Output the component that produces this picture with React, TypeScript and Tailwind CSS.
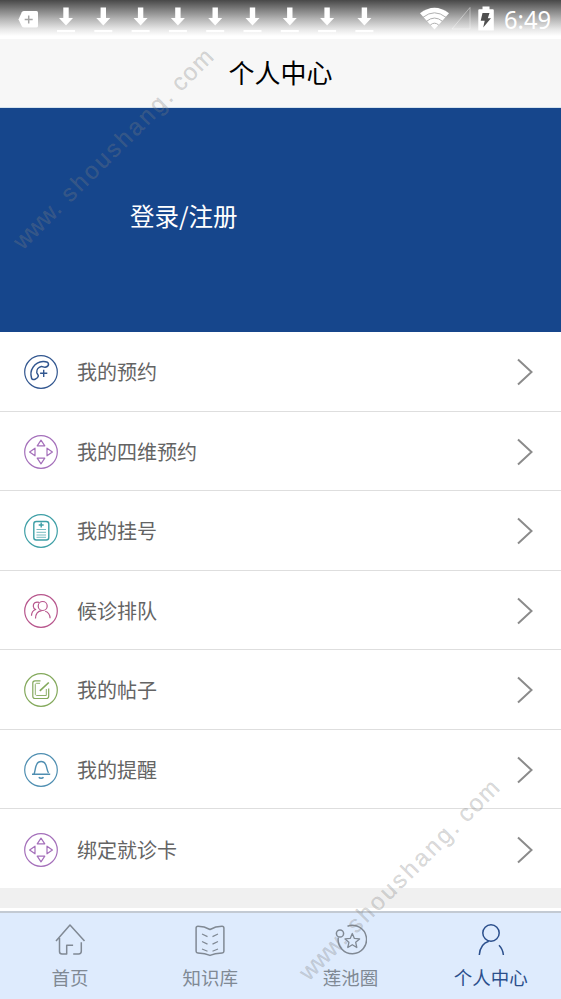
import type { ReactNode } from 'react'

interface MenuItem {
  label: string
  color: string
  icon: ReactNode
}

interface TabItem {
  label: string
  active?: boolean
  icon: ReactNode
}

const arrows = (
  <path d="M17 6.200l3.800 5.600h-7.600zM17 29.800l3.800-5.600h-7.600zM5.600 18l5.400-3.800v7.600zM28.400 18l-5.400-3.800v7.600z" />
)

const menuItems: MenuItem[] = [
  {
    label: '我的预约',
    color: 'text-[#31568f]',
    icon: (
      <>
        <path
          d="M7.600 24.200C5 16.500 10.500 8 19 7.600c3-.1 5.300.8 5.500 2.600.1 1.600-1.600 2.600-3.200 3-1.700.4-2.500-1-4-.7-3 .6-4.800 3.300-4.500 6.200.2 1.400 1.900 1.900 1.500 3.500-.5 2.400-5.700 5-6.700 2z"
          strokeWidth="1.500"
        />
        <path d="M19.700 15.700v7.200M16.100 19.300h7.200" strokeWidth="1.400" />
      </>
    ),
  },
  { label: '我的四维预约', color: 'text-[#a46fba]', icon: arrows },
  {
    label: '我的挂号',
    color: 'text-[#3e9fa6]',
    icon: (
      <>
        <rect x="9.800" y="8.500" width="15" height="18.500" rx="2.500" strokeWidth="1.400" />
        <path d="M17.200 9.500v5M14.700 12h5" strokeWidth="1.400" />
        <path d="M12.500 16.500h9.500M12.500 19.300h9.500M12.500 22h9.500M12.500 24.300h9.500" strokeWidth="0.700" />
      </>
    ),
  },
  {
    label: '候诊排队',
    color: 'text-[#b7558c]',
    icon: (
      <>
        <circle cx="18.700" cy="13" r="4.500" />
        <path d="M15 9.400c-3.400-1.200-6 1-5.700 3.900.1 1.500 1 2.700 2.400 3.200-2.500.9-4.200 3.300-4.200 6.300M11.500 25.500c.200-4.800 2.700-7.600 6.200-7.900M21.200 18.200c3 .9 4.700 3.500 4.900 7" />
      </>
    ),
  },
  {
    label: '我的帖子',
    color: 'text-[#83a95b]',
    icon: (
      <>
        <path d="M16.500 8.900h-5.500c-1.300 0-2.200.9-2.200 2.200v13.200c0 1.300.9 2.200 2.200 2.200h11.500c1.300 0 2.200-.9 2.200-2.200v-7.800" />
        <path d="M16 11.300h-3.200c-.9 0-1.500.6-1.500 1.500v9.200c0 .9.6 1.500 1.500 1.500h9.500v-6.500" strokeWidth="0.900" />
        <path d="M15.800 18.800l9-8.300" strokeWidth="1.700" />
      </>
    ),
  },
  {
    label: '我的提醒',
    color: 'text-[#4e8eb1]',
    icon: (
      <>
        <path
          d="M8 22.300h18.200M10 22c1.300-2.600.9-5.600 2.400-9 1.800-4.600 7.600-4.600 9.500 0 1.300 3.400 1 5.500 2.600 7.800"
          strokeWidth="1.400"
        />
        <path d="M14.800 25.200c1.100 1.500 3.600 1.500 4.700 0" strokeWidth="1.500" />
      </>
    ),
  },
  { label: '绑定就诊卡', color: 'text-[#a46fba]', icon: arrows },
]

const tabs: TabItem[] = [
  {
    label: '首页',
    icon: <path d="M2 18L16 2l14.500 16M5.500 15v13.500c0 1.800.7 2.500 2.500 2.500h4.700v-8.800h6.400M19.200 31h5.400c1.800 0 2.700-.9 2.700-2.700V19.200" />,
  },
  {
    label: '知识库',
    icon: (
      <>
        <path d="M16 6.500C12.500 4.500 8.500 3.300 4 3.300c-1.200 0-1.900.6-1.900 1.800v23.200c0 1.200.6 1.700 1.800 1.800 4.600.3 8.800 1 12.100 2.300 3.300-1.300 7.500-2 12.100-2.300 1.200-.1 1.800-.6 1.800-1.800V5.100c0-1.200-.7-1.800-1.900-1.800-4.500 0-8.500 1.200-12 3.200z" />
        <path d="M8 11l5.500 2.600M8 18.500l5.500 2.600M8 26l5.500 2.300M24 11l-5.500 2.600M24 18.500l-5.500 2.600M24 26l-5.500 2.300" strokeWidth="1.200" />
      </>
    ),
  },
  {
    label: '莲池圈',
    icon: (
      <>
        <path d="M12.500 3.200A14.200 14.200 0 1 1 3.300 14.500" />
        <circle cx="5" cy="10.500" r="3.600" />
        <path d="M17.300 10.500l2.100 4.900 5.200.5-3.900 3.400 1.100 5.200-4.500-2.800-4.500 2.800 1.100-5.200-3.900-3.400 5.200-.5z" strokeWidth="1.300" />
      </>
    ),
  },
  {
    label: '个人中心',
    active: true,
    icon: (
      <>
        <circle cx="16" cy="10" r="8.200" />
        <path d="M4.300 32c.5-7 4-12.200 9.500-13.800M24 22.300c2.500 2.500 4 5.600 4.400 9.700" />
      </>
    ),
  },
]

function StatusBar() {
  return (
    <div className="flex h-[39px] shrink-0 bg-[linear-gradient(to_bottom,#484848_0px,#7c7c7c_9px,#b4b4b4_19px,#e6e6e6_29px,#ffffff_36px)] text-white">
      <svg className="h-[39px] w-[561px]" viewBox="0 0 561 39" fill="currentColor">
        <path d="M24 11h12.500q1.500 0 1.500 1.500v13.500q0 1.500-1.500 1.500H24q-1.500 0-2.200-1.200L18.500 19.500l3.300-7.200Q22.500 11 24 11z" />
        <path d="M28.700 15.500v8M24.700 19.500h8" stroke="#a5a5a5" strokeWidth="1.500" />
        {Array.from({ length: 9 }, (_, i) => (
          <g key={i} transform={`translate(${66 + i * 37.3} 0)`}>
            <path d="M-2.700 7.500h5.400V18h4.300L0 25.500-7 18h4.300z" />
            <path d="M-9 30h18v2.200H-9z" />
          </g>
        ))}
        <path d="M420 13.300q14.500-11 29 0L434.500 29.500z" />
        <g fill="none" stroke="#b0b0b0" strokeWidth="1">
          <path d="M423 17.300q11.500-9 23 0M426.500 21.300q8-6.500 16 0M430.300 25q4.200-3.600 8.400 0" />
        </g>
        <path d="M452 29L470 7.500V29z" fill="none" stroke="currentColor" strokeOpacity="0.400" />
        <path d="M482.500 6.500h7v2.700h3.300q1 0 1 1v20.300h-15.500V10.200q0-1 1-1h3.200z" />
        <path d="M482.500 13h7l-1.700 5.200h3.200l-7.800 9.300 1.500-6.800h-4z" fill="#505050" />
        <text x="504" y="29" fontSize="25" textLength="47" lengthAdjust="spacingAndGlyphs" fontFamily="Noto Sans, sans-serif">
          6:49
        </text>
      </svg>
    </div>
  )
}

function MenuRow({ label, color, icon }: MenuItem) {
  return (
    <div className="flex h-[79.5px] shrink-0 items-center border-b border-[#dedede] pl-6 pr-7 pt-[2px] last:h-[79px] last:border-b-0">
      <svg
        className={`h-9 w-[34px] ${color}`}
        viewBox="0 0 34 36"
        fill="none"
        stroke="currentColor"
        strokeWidth="1.200"
        strokeLinejoin="round"
      >
        <circle cx="17" cy="18" r="16.300" />
        {icon}
      </svg>
      <span className="ml-[19px] flex-1 text-[20px] leading-none text-[#646464]">{label}</span>
      <svg className="h-7 w-4" viewBox="0 0 16 28" fill="none" stroke="#8b8b8b" strokeWidth="2">
        <path d="M1 1.500L14.500 14 1 26.500" />
      </svg>
    </div>
  )
}

function Watermark({ className }: { className: string }) {
  return (
    <div
      className={`pointer-events-none absolute origin-left -rotate-45 whitespace-nowrap font-['Liberation_Sans'] text-[24px] leading-none text-[#808080]/30 [-webkit-text-stroke:0.4px_rgb(128_128_128/0.2)] ${className}`}
    >
      <span className="tracking-[-0.500px]">www</span>
      <span className="tracking-[10px]">.</span>
      <span className="tracking-[2.600px]">shoushang</span>
      <span className="tracking-[9px]">.</span>
      <span className="tracking-[1.500px]">com</span>
    </div>
  )
}

export default function App() {
  return (
    <div className="relative flex h-[999px] w-[561px] flex-col overflow-hidden bg-white font-['Noto_Sans_CJK_SC',sans-serif]">
      <StatusBar />
      <header className="flex h-[69px] shrink-0 items-center justify-center border-b border-[#d5e3ee] bg-[#f7f7f7] pb-[2px] text-[26px] leading-none text-black">
        个人中心
      </header>
      <section className="flex h-56 shrink-0 items-center bg-[#16468c] pl-[130px] text-[24.5px] leading-none text-white">
        <span className="-mt-2">登录/注册</span>
      </section>
      <main className="flex shrink-0 flex-col">
        {menuItems.map((item) => (
          <MenuRow key={item.label} {...item} />
        ))}
      </main>
      <div className="h-5 shrink-0 bg-[#f0f0f0]" />
      <nav className="mt-[3px] grid h-[88px] shrink-0 grid-cols-4 border-t-2 border-[#c3cad3] bg-[#deebfd]">
        {tabs.map((tab) => (
          <div
            key={tab.label}
            className={`flex flex-col items-center pt-[10px] ${tab.active ? 'text-[#2b4f8c]' : 'text-[#808994]'}`}
          >
            <svg
              className="h-[34px] w-8"
              viewBox="0 0 32 34"
              fill="none"
              stroke="currentColor"
              strokeWidth="1.500"
              strokeLinejoin="round"
            >
              {tab.icon}
            </svg>
            <span className="mt-[11px] text-[18.5px] leading-none">{tab.label}</span>
          </div>
        ))}
      </nav>
      <Watermark className="left-[17px] top-[233px]" />
      <Watermark className="left-[303px] top-[964px]" />
    </div>
  )
}
